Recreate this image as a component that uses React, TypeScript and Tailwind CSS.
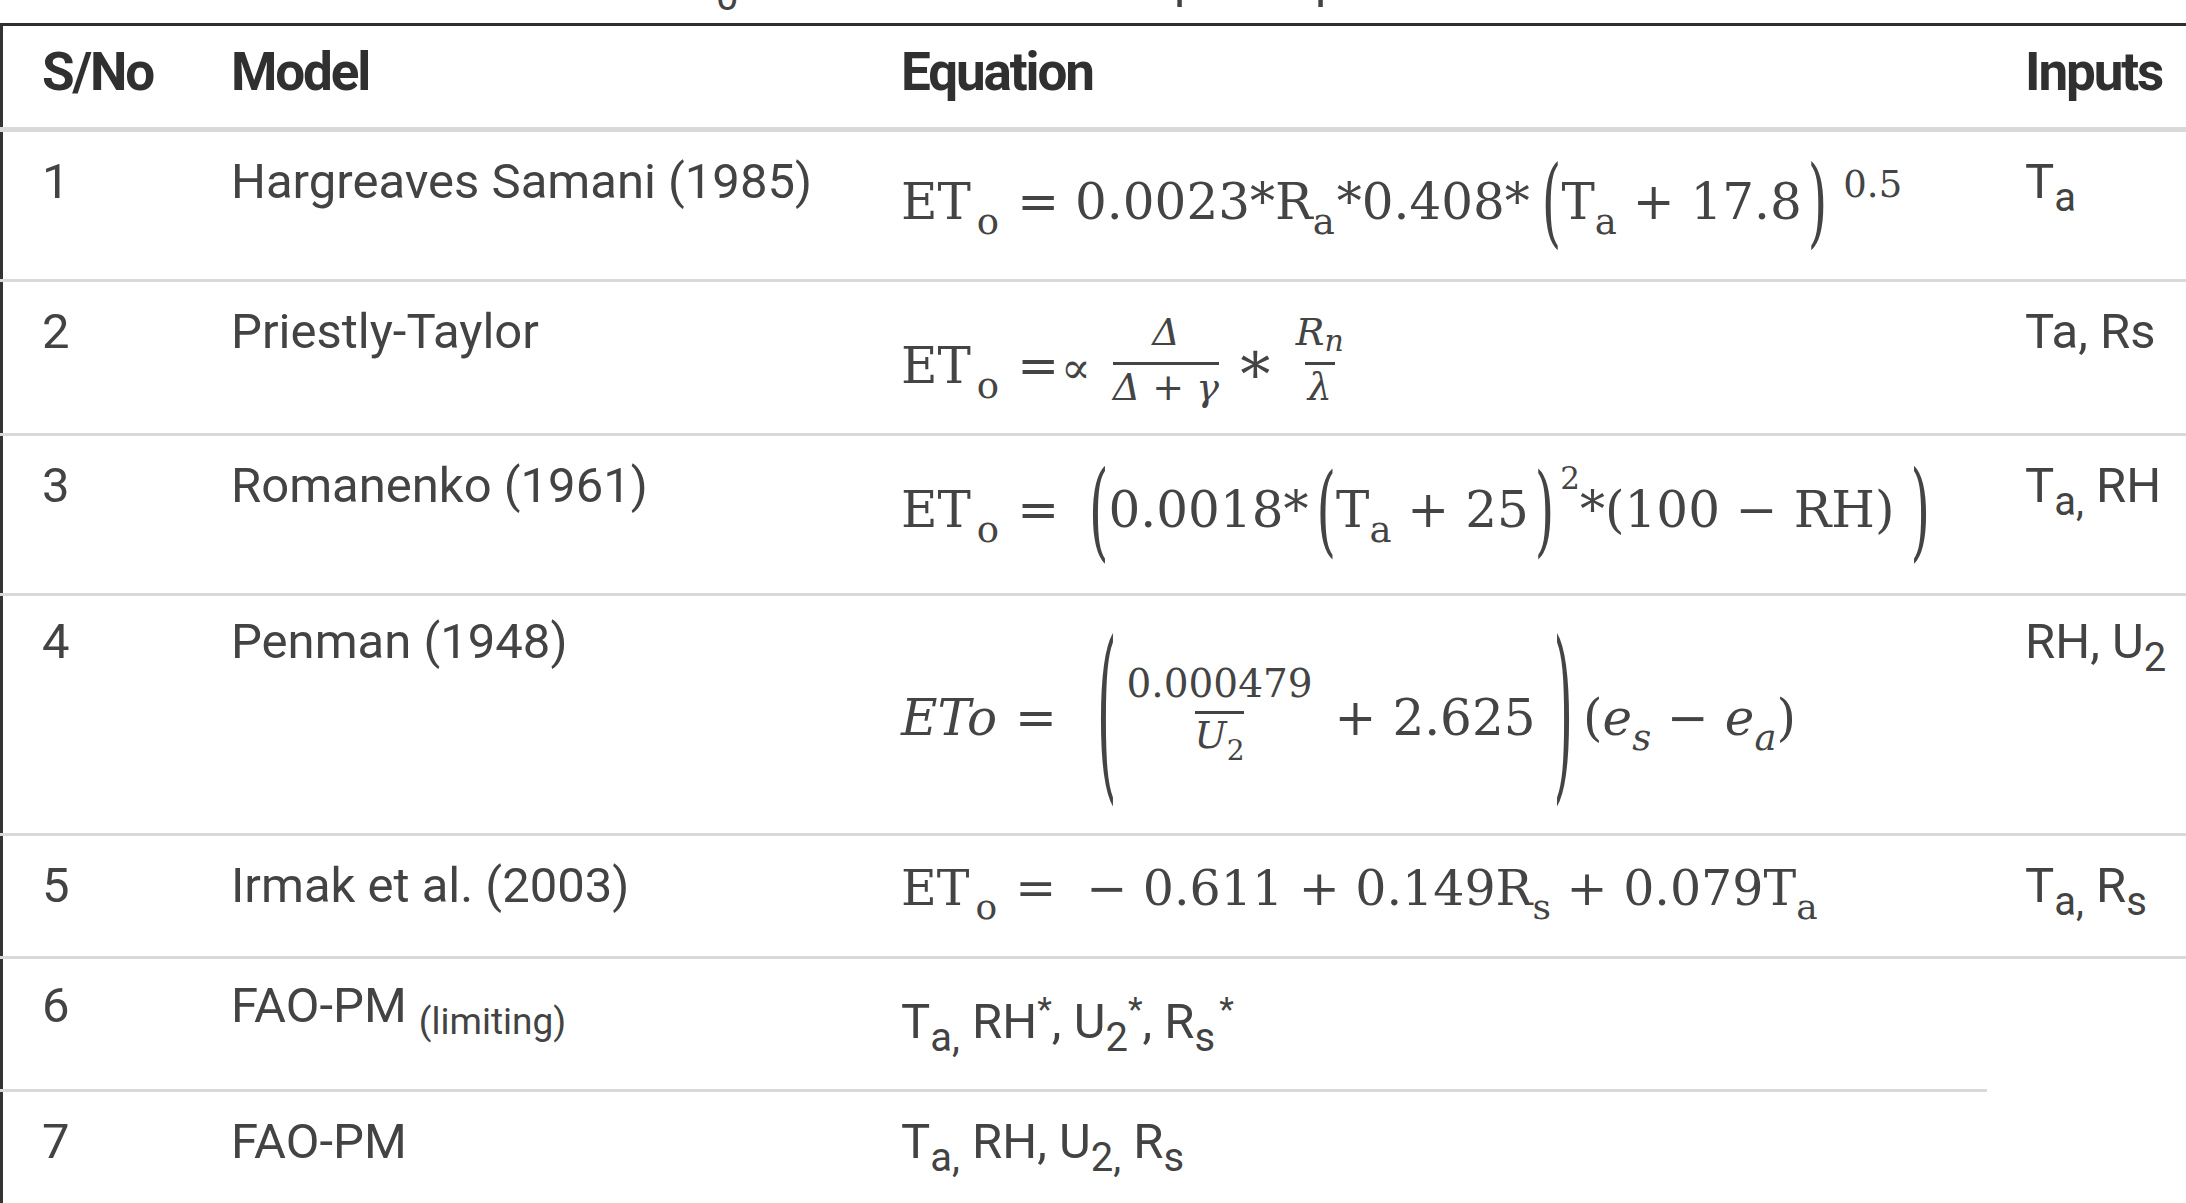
import React from "react";

const serif = "font-['DejaVu_Serif',serif]";
const tSub = "align-[-13px] text-[40px] leading-[0]";
const tSup = "align-[17px] text-[34px] leading-[0]";
const eSub = "align-[-15px] text-[37px] leading-[0]";

function Row({ h, children }: { h: string; children: React.ReactNode }) {
    return (
        <div className={`grid grid-cols-[228px_670px_1124px_161px] border-l-[3px] border-[#333] ${h}`}>
            {children}
        </div>
    );
}

function Sep({ w = "w-full", h = "h-[3px]" }: { w?: string; h?: string }) {
    return <div className={`${w} ${h} bg-[#d9d9d9]`} />;
}

function App() {
    return (
        <div className="w-[2186px] h-[1203px] overflow-hidden bg-white font-['Roboto',sans-serif] text-[#434343]">
            {/* caption, only the descenders show above the rule */}
            <div className="h-[23px] overflow-hidden">
                <div className="mt-[-44px] flex whitespace-nowrap text-[49px] leading-none">
                    <span className="w-[716px] shrink-0 text-right">Table 1. The ET</span>
                    <span className="w-[458px] shrink-0">
                        <span className={tSub}>0</span> models and their in
                    </span>
                    <span className="w-[141px] shrink-0">put as </span>
                    <span>per literature</span>
                </div>
            </div>
            <div className="h-[3px] bg-[#2f2f2f]" />

            <Row h="h-[101px]">
                <div className="pl-[39px] pt-[20px] text-[53px] font-bold tracking-[-0.04em] leading-none text-[#303030]">S/No</div>
                <div className="pt-[20px] text-[53px] font-bold tracking-[-0.04em] leading-none text-[#303030]">Model</div>
                <div className="pt-[20px] text-[53px] font-bold tracking-[-0.04em] leading-none text-[#303030]">Equation</div>
                <div className="pt-[20px] text-[53px] font-bold tracking-[-0.04em] leading-none text-[#303030]">Inputs</div>
            </Row>
            <Sep h="h-[5px]" />

            {/* 1 */}
            <Row h="h-[147px]">
                <div className="pl-[39px] pt-[25px] text-[49px] leading-none">1</div>
                <div className="pt-[25px] text-[49px] leading-none">Hargreaves Samani (1985)</div>
                <div className={`${serif} pt-[10px] text-[50px] leading-[120px] whitespace-nowrap text-[#444]`}>
                    ET<span className={`${eSub} ml-[6px]`}>o</span>
                    <span className="ml-[18px]">=</span>
                    <span className="ml-[16px]">0.0023*R</span>
                    <span className={`${eSub} mr-[2px]`}>a</span>*0.408*
                    <span className="inline-block leading-none scale-y-[1.95] ml-[12px]">(</span>T
                    <span className={eSub}>a</span> + 17.8
                    <span className="inline-block leading-none scale-y-[1.95] ml-[6px]">)</span>
                    <span className="align-[22px] text-[37px] leading-[0] ml-[16px]">0.5</span>
                </div>
                <div className="pt-[25px] text-[49px] leading-none whitespace-nowrap">
                    T<span className={tSub}>a</span>
                </div>
            </Row>
            <Sep />

            {/* 2 */}
            <Row h="h-[151px]">
                <div className="pl-[39px] pt-[25px] text-[49px] leading-none">2</div>
                <div className="pt-[25px] text-[49px] leading-none">Priestly-Taylor</div>
                <div className={`${serif} pt-[20px] text-[50px] leading-[120px] whitespace-nowrap text-[#444]`}>
                    ET<span className={`${eSub} ml-[6px]`}>o</span>
                    <span className="ml-[18px]">=</span>
                    <span className="text-[44px] ml-[2px]">∝</span>
                    <span className="inline-block align-[-17px] text-center italic text-[38px] leading-none ml-[22px]">
                        <span className="block pb-[11px]">Δ</span>
                        <span className="block border-t-[3px] border-[#444] pt-[3px]">Δ + γ</span>
                    </span>
                    <span className="text-[60px] ml-[16px]">∗</span>
                    <span className="inline-block align-[-17px] text-center italic text-[38px] leading-none ml-[20px]">
                        <span className="block pb-[11px]">
                            R<span className="align-[-6px] text-[30px] leading-[0]">n</span>
                        </span>
                        <span className="block">
                            <span className="inline-block border-t-[3px] border-[#444] pt-[3px] px-[3px]">λ</span>
                        </span>
                    </span>
                </div>
                <div className="pt-[25px] text-[49px] leading-none whitespace-nowrap">Ta, Rs</div>
            </Row>
            <Sep />

            {/* 3 */}
            <Row h="h-[157px]">
                <div className="pl-[39px] pt-[25px] text-[49px] leading-none">3</div>
                <div className="pt-[25px] text-[49px] leading-none">Romanenko (1961)</div>
                <div className={`${serif} pt-[14px] text-[50px] leading-[120px] whitespace-nowrap text-[#444]`}>
                    ET<span className={`${eSub} ml-[6px]`}>o</span>
                    <span className="ml-[18px]">=</span>
                    <span className="inline-block leading-none scale-y-[2.15] ml-[30px]">(</span>0.0018*
                    <span className="inline-block leading-none scale-y-[2] ml-[8px]">(</span>T
                    <span className={eSub}>a</span> + 25
                    <span className="inline-block leading-none scale-y-[2] ml-[6px]">)</span>
                    <span className="align-[38px] text-[31px] leading-[0] ml-[6px]">2</span>*(100 − RH)
                    <span className="inline-block leading-none scale-y-[2.15] ml-[16px]">)</span>
                </div>
                <div className="pt-[25px] text-[49px] leading-none whitespace-nowrap">
                    T<span className={tSub}>a,</span> RH
                </div>
            </Row>
            <Sep />

            {/* 4 */}
            <Row h="h-[237px]">
                <div className="pl-[39px] pt-[21px] text-[49px] leading-none">4</div>
                <div className="pt-[21px] text-[49px] leading-none">Penman (1948)</div>
                <div className={`${serif} pt-[62px] text-[50px] leading-[120px] whitespace-nowrap text-[#444]`}>
                    <span className="italic">ETo</span>
                    <span className="ml-[18px]">=</span>
                    <span className="inline-block leading-none scale-y-[3.8] align-[6px] ml-[40px]">(</span>
                    <span className="inline-block align-[-13px] text-center leading-none ml-[10px]">
                        <span className="block text-[39px] pb-[8px]">0.000479</span>
                        <span className="block text-[38px]">
                            <span className="inline-block border-t-[3px] border-[#444] pt-[2px] italic">
                                U<span className="align-[-12px] text-[28px] leading-[0] not-italic">2</span>
                            </span>
                        </span>
                    </span>
                    <span className="ml-[22px]">+ 2.625</span>
                    <span className="inline-block leading-none scale-y-[3.8] align-[6px] ml-[18px]">)</span>
                    <span className="ml-[10px]">(</span>
                    <span className="italic">
                        e<span className={eSub}>s</span> − e<span className={eSub}>a</span>
                    </span>
                    )
                </div>
                <div className="pt-[21px] text-[49px] leading-none whitespace-nowrap">
                    RH, U<span className={tSub}>2</span>
                </div>
            </Row>
            <Sep />

            {/* 5 */}
            <Row h="h-[120px]">
                <div className="pl-[39px] pt-[25px] text-[49px] leading-none">5</div>
                <div className="pt-[25px] text-[49px] leading-none">Irmak et al. (2003)</div>
                <div className={`${serif} pt-[28px] text-[49px] leading-none whitespace-nowrap text-[#444]`}>
                    ET<span className="align-[-14px] text-[36px] leading-[0] ml-[6px]">o</span>
                    <span className="ml-[18px]">=</span>
                    <span className="ml-[30px]">− 0.611 + 0.149R</span>
                    <span className="align-[-14px] text-[36px] leading-[0]">s</span> + 0.079T
                    <span className="align-[-14px] text-[36px] leading-[0]">a</span>
                </div>
                <div className="pt-[25px] text-[49px] leading-none whitespace-nowrap">
                    T<span className={tSub}>a,</span> R<span className={tSub}>s</span>
                </div>
            </Row>
            <Sep />

            {/* 6 */}
            <Row h="h-[130px]">
                <div className="pl-[39px] pt-[22px] text-[49px] leading-none">6</div>
                <div className="pt-[22px] text-[49px] leading-none whitespace-nowrap">
                    FAO-PM <span className="align-[-12px] text-[37px] leading-[0]">(limiting)</span>
                </div>
                <div className="pt-[38px] text-[49px] leading-none whitespace-nowrap">
                    T<span className={tSub}>a,</span> RH<span className={tSup}>*</span>, U<span className={tSub}>2</span>
                    <span className={tSup}>*</span>, R<span className={tSub}>s</span>
                    <span className={`${tSup} ml-[4px]`}>*</span>
                </div>
                <div />
            </Row>
            <Sep w="w-[1987px]" />

            {/* 7 */}
            <Row h="h-[140px]">
                <div className="pl-[39px] pt-[25px] text-[49px] leading-none">7</div>
                <div className="pt-[25px] text-[49px] leading-none">FAO-PM</div>
                <div className="pt-[25px] text-[49px] leading-none whitespace-nowrap">
                    T<span className={tSub}>a,</span> RH, U<span className={tSub}>2,</span> R<span className={tSub}>s</span>
                </div>
                <div />
            </Row>
        </div>
    );
}

export default App;
